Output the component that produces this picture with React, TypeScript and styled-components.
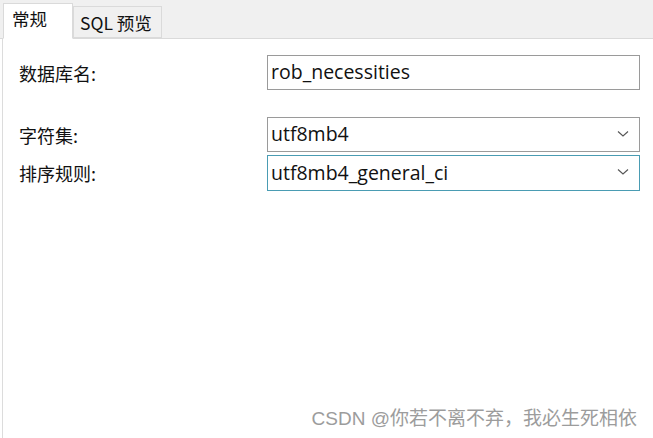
import React from 'react';
import styled, { createGlobalStyle } from 'styled-components';

const GlobalStyle = createGlobalStyle`
  html, body {
    margin: 0;
    padding: 0;
    background: #ffffff;
  }
  body {
    font-family: "Open Sans", "Noto Sans", "Noto Sans CJK SC", sans-serif;
    color: #1a1a1a;
  }
`;

const Window = styled.div`
  position: relative;
  width: 653px;
  height: 438px;
  display: flex;
  flex-direction: column;
  overflow: hidden;
  background: #ffffff;
`;

const TabStrip = styled.div`
  height: 38px;
  flex-shrink: 0;
  display: flex;
  align-items: flex-end;
  padding-left: 3px;
  background: #f0f0f0;
  border-bottom: 1px solid #dadada;
`;

const Tab = styled.div<{ $active?: boolean }>`
  box-sizing: border-box;
  display: flex;
  align-items: center;
  font-family: "Noto Sans CJK SC", "Noto Sans", sans-serif;
  font-size: 17.5px;
  color: #111;
  border: 1px solid #dadada;
  margin-bottom: ${(p) => (p.$active ? '-1px' : '0')};
  border-bottom: ${(p) => (p.$active ? '1px solid #ffffff' : '1px solid #dadada')};
  background: ${(p) => (p.$active ? '#ffffff' : '#f0f0f0')};
  height: ${(p) => (p.$active ? '36px' : '32px')};
  width: ${(p) => (p.$active ? '70px' : '89px')};
  padding-left: ${(p) => (p.$active ? '8px' : '6px')};
  padding-bottom: ${(p) => (p.$active ? '6px' : '0')};
  white-space: nowrap;
`;

const Panel = styled.div`
  flex: 1;
  margin-left: 2px;
  border-left: 1px solid #dcdcdc;
  padding: 16px 14px 0 16px;
  display: flex;
  flex-direction: column;
`;

const Row = styled.div<{ $gap: number }>`
  display: grid;
  grid-template-columns: 248px 373px;
  align-items: center;
  margin-top: ${(p) => p.$gap}px;
`;

const Label = styled.label`
  font-family: "Noto Sans CJK SC", "Noto Sans", sans-serif;
  font-size: 18px;
  color: #111;
`;

const Field = styled.div<{ $focused?: boolean; $height: number }>`
  box-sizing: border-box;
  height: ${(p) => p.$height}px;
  display: flex;
  align-items: center;
  justify-content: space-between;
  padding: 0 10px 2px 3px;
  border: 1px solid ${(p) => (p.$focused ? '#4a9cb3' : '#9a9a9a')};
  background: #ffffff;
  font-family: "Open Sans", "Noto Sans", sans-serif;
  font-size: 19.5px;
  color: #111;
`;

const Chevron = styled.svg`
  width: 12px;
  height: 8px;
  flex-shrink: 0;
`;

const Watermark = styled.div`
  position: absolute;
  right: 16px;
  bottom: 8px;
  font-family: "Liberation Sans", "Noto Sans CJK SC", sans-serif;
  font-size: 19px;
  color: #9c9c9c;
  text-shadow: 0 0 1px rgba(255, 255, 255, 0.8);
  white-space: nowrap;
`;

const Arrow: React.FC = () => (
  <Chevron viewBox="0 0 12 8">
    <path d="M1 1.5 L6 6 L11 1.5" fill="none" stroke="#555" strokeWidth="1.1" />
  </Chevron>
);

const App: React.FC = function () {
  return (
    <>
      <GlobalStyle />
      <Window>
        <TabStrip>
          <Tab $active>常规</Tab>
          <Tab>SQL 预览</Tab>
        </TabStrip>
        <Panel>
          <Row $gap={0}>
            <Label>数据库名:</Label>
            <Field $height={35}>rob_necessities</Field>
          </Row>
          <Row $gap={27}>
            <Label>字符集:</Label>
            <Field $height={35}>
              utf8mb4
              <Arrow />
            </Field>
          </Row>
          <Row $gap={3}>
            <Label>排序规则:</Label>
            <Field $height={36} $focused>
              utf8mb4_general_ci
              <Arrow />
            </Field>
          </Row>
        </Panel>
        <Watermark>CSDN @你若不离不弃，我必生死相依</Watermark>
      </Window>
    </>
  );
};

export default App;
